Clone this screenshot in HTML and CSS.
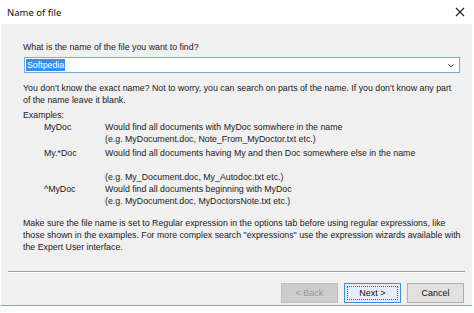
FILE: index.html
```
<!DOCTYPE html>
<html lang="en">
<head>
    <meta charset="UTF-8">
    <title>Name of file</title>
    <link rel="stylesheet" href="styles.css">
</head>
<body>
    <div class="window">
        <div class="titlebar">
            <span class="title">Name of file</span>
            <svg class="close" width="10" height="10" viewBox="0 0 10 10">
                <path d="M1 1 L9 9 M9 1 L1 9" stroke="#222" stroke-width="1.1" fill="none"/>
            </svg>
        </div>

        <div class="content">
            <div class="label">What is the name of the file you want to find?</div>
            <div class="combo">
                <span class="selected">Softpedia</span>
                <svg class="chevron" width="8" height="5" viewBox="0 0 8 5">
                    <path d="M1 1 L4 4 L7 1" stroke="#555" stroke-width="1" fill="none"/>
                </svg>
            </div>

            <p class="intro">You don't know the exact name? Not to worry, you can search on parts of the name. If you don't know any part of the name leave it blank.</p>

            <div class="examples-title">Examples:</div>
            <div class="examples">
                <div class="ex-row">
                    <span class="pattern">MyDoc</span>
                    <span class="desc">Would find all documents with MyDoc somwhere in the name<br>(e.g. MyDocument.doc, Note_From_MyDoctor.txt etc.)</span>
                </div>
                <div class="ex-row ex-gap">
                    <span class="pattern">My.*Doc</span>
                    <span class="desc">Would find all documents having My and then Doc somewhere else in the name<br><br>(e.g. My_Document.doc, My_Autodoc.txt etc.)</span>
                </div>
                <div class="ex-row">
                    <span class="pattern">^MyDoc</span>
                    <span class="desc">Would find all documents beginning with MyDoc<br>(e.g. MyDocument.doc, MyDoctorsNote.txt etc.)</span>
                </div>
            </div>

            <p class="note">Make sure the file name is set to Regular expression in the options tab before using regular expressions, like those shown in the examples. For more complex search "expressions" use the expression wizards available with the Expert User interface.</p>

            <div class="separator"></div>

            <div class="buttons">
                <button class="btn disabled">&lt; Back</button>
                <button class="btn default">Next &gt;</button>
                <button class="btn">Cancel</button>
            </div>
        </div>
    </div>
</body>
</html>
```

FILE: styles.css
```
body {
    margin: 0;
    background: #ffffff;
    font-family: "Liberation Sans", Arial, sans-serif;
    font-size: 8.8px;
    color: #1a1a1a;
}
.window {
    width: 474px;
    height: 313px;
}
.titlebar {
    height: 24px;
    display: flex;
    align-items: center;
    justify-content: space-between;
    padding: 0 9px 0 7px;
    background: #ffffff;
}
.title {
    font-family: "Noto Sans", "Open Sans", sans-serif;
    font-size: 9.5px;
    color: #111;
}
.close {
    display: block;
}
.content {
    margin: 0 2px 0 1px;
    height: 282px;
    padding: 17px 0 0 0;
    box-sizing: border-box;
    background: #f0f0f0;
    border-bottom: 1px solid #6fa9de;
    line-height: 12px;
}
.label,
.intro,
.examples-title,
.examples,
.note {
    margin: 0 4px 0 22px;
}
.combo {
    margin: 4px 12px 0 23px;
    height: 16px;
    box-sizing: border-box;
    border: 1px solid #7aa8d8;
    background: #ffffff;
    display: flex;
    align-items: center;
    justify-content: space-between;
    padding: 0 4px 0 1px;
}
.selected {
    background: #3390f0;
    color: #ffffff;
    line-height: 12px;
    padding: 0 1px;
}
.chevron {
    display: block;
}
.intro {
    margin-top: 9px;
    margin-right: 12px;
}
.examples-title {
    margin-top: 3px;
}
.examples {
    margin-left: 43px;
}
.ex-row {
    display: flex;
}
.ex-gap {
    margin-top: 2px;
}
.pattern {
    width: 61px;
    flex: none;
}
.note {
    margin-top: 10px;
}
.separator {
    margin: 18px 7px 0 7px;
    height: 1px;
    background: #a0a0a0;
    border-bottom: 1px solid #ffffff;
}
.buttons {
    display: flex;
    justify-content: flex-end;
    gap: 6px;
    margin: 10px 8px 0 0;
}
.btn {
    width: 57px;
    height: 20px;
    font-family: "Liberation Sans", Arial, sans-serif;
    font-size: 9px;
    color: #111;
    background: #e1e1e1;
    border: 1px solid #adadad;
    padding: 0;
}
.btn.disabled {
    background: #cccccc;
    border-color: #bfbfbf;
    color: #9a9a9a;
}
.btn.default {
    border: 1px solid #3c8ee0;
    background: #e5eef8;
    outline: 1px dotted #555;
    outline-offset: -4px;
}
```
